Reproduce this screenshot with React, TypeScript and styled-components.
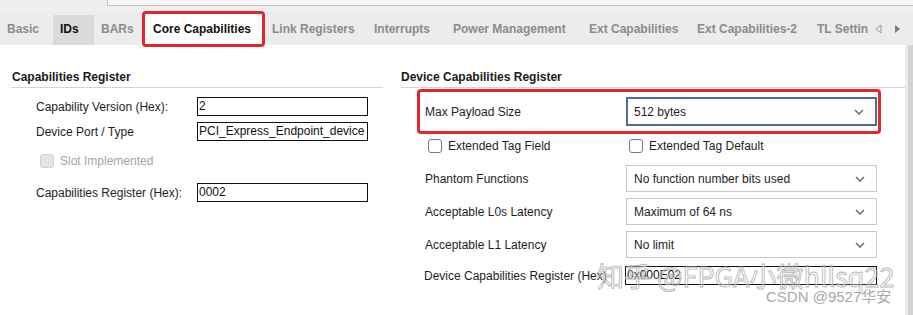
import React from 'react';
import styled, { createGlobalStyle } from 'styled-components';

const GlobalStyle = createGlobalStyle`
  html, body {
    margin: 0;
    padding: 0;
    background: #ffffff;
  }
  body {
    font-family: 'Liberation Sans', Arial, sans-serif;
    font-size: 12px;
    color: #1e1e1e;
  }
`;

const Page = styled.div`
  position: relative;
  width: 913px;
  height: 315px;
  overflow: hidden;
  display: flex;
  flex-direction: column;
  background: #ffffff;
`;

const TopStrip = styled.div`
  height: 12px;
  background: #efefef;
  display: flex;
`;

const TopBox = styled.div`
  margin-left: 107px;
  flex: 1;
  height: 5px;
  background: #f7f7f7;
  border-left: 1px solid #c4c4c4;
  border-bottom: 1px solid #c4c4c4;
`;

const TabBar = styled.div`
  height: 33px;
  background: #ececec;
  display: flex;
  align-items: stretch;
`;

const Tab = styled.div<{ $w: number; $active?: boolean; $dark?: boolean; $sep?: boolean }>`
  position: relative;
  flex: 0 0 ${(p) => p.$w}px;
  box-sizing: border-box;
  display: flex;
  align-items: center;
  padding-left: 7px;
  white-space: nowrap;
  overflow: hidden;
  font-weight: bold;
  font-size: 12px;
  color: ${(p) => (p.$active || p.$dark ? '#111111' : '#8b8b8b')};
  background: ${(p) => (p.$active ? '#ffffff' : p.$dark ? '#dadada' : 'transparent')};
  margin-top: ${(p) => (p.$dark ? '3px' : '0')};
  padding-bottom: ${(p) => (p.$dark ? '3px' : '0')};
  border-right: ${(p) => (p.$sep ? '1px solid transparent' : 'none')};

  &::after {
    content: '';
    display: ${(p) => (p.$sep ? 'block' : 'none')};
    position: absolute;
    right: -1px;
    top: 4px;
    bottom: 4px;
    width: 1px;
    background: #c6c6c6;
  }
`;

const ActiveTab = styled(Tab)`
  margin: -1px 0 -2px;
  padding-left: 8px;
  border: 3px solid #e1272b;
  border-radius: 4px;
`;

const TabArrows = styled.div`
  flex: 1;
  display: flex;
  align-items: center;
  gap: 12px;
  padding-left: 7px;
`;

const Body = styled.div`
  flex: 1;
  display: flex;
`;

const Column = styled.div<{ $w: number; $pl: number; $pr: number }>`
  flex: 0 0 ${(p) => p.$w}px;
  box-sizing: border-box;
  padding: 24px ${(p) => p.$pr}px 0 ${(p) => p.$pl}px;
  display: flex;
  flex-direction: column;
`;

const SectionTitle = styled.div`
  font-weight: bold;
  font-size: 12px;
  line-height: 16px;
  padding-bottom: 2px;
  border-bottom: 1px solid #d4d4d4;
  color: #1a1a1a;
`;

const FieldRow = styled.div<{ $mt?: number; $h?: number; $label: number; $pl?: number }>`
  display: grid;
  grid-template-columns: ${(p) => p.$label}px auto;
  align-items: center;
  margin-top: ${(p) => p.$mt ?? 0}px;
  padding-left: ${(p) => p.$pl ?? 0}px;
  height: ${(p) => p.$h ?? 19}px;
`;

const Label = styled.span<{ $pl?: number }>`
  padding-left: ${(p) => p.$pl ?? 0}px;
  white-space: nowrap;
  color: #1e1e1e;
`;

const TextInput = styled.div<{ $w: number }>`
  box-sizing: border-box;
  width: ${(p) => p.$w}px;
  height: 19px;
  border: 1px solid #111111;
  padding-left: 1px;
  line-height: 17px;
  white-space: nowrap;
  overflow: hidden;
  color: #111111;
`;

const Select = styled.div<{ $focus?: boolean }>`
  box-sizing: border-box;
  width: 251px;
  height: ${(p) => (p.$focus ? 29 : 27)}px;
  border: ${(p) => (p.$focus ? '2px solid #4d6aa3' : '1px solid #c9c9c9')};
  display: flex;
  align-items: center;
  justify-content: space-between;
  padding: 0 11px 0 ${(p) => (p.$focus ? 6 : 7)}px;
  color: #1e1e1e;
  background: #ffffff;
`;

const CheckRow = styled.div<{ $mt: number; $pl: number; $col?: number }>`
  display: grid;
  grid-template-columns: ${(p) => (p.$col ? `${p.$col}px auto` : 'auto')};
  align-items: center;
  margin-top: ${(p) => p.$mt}px;
  padding-left: ${(p) => p.$pl}px;
  height: 20px;
`;

const Check = styled.label<{ $disabled?: boolean }>`
  display: flex;
  align-items: center;
  gap: 6px;
  color: ${(p) => (p.$disabled ? '#a4a4a4' : '#1e1e1e')};
`;

const Box = styled.span<{ $disabled?: boolean }>`
  box-sizing: border-box;
  width: 14px;
  height: 14px;
  border-radius: 3px;
  border: 1px solid ${(p) => (p.$disabled ? '#cfcfcf' : '#7a7a7a')};
  background: ${(p) => (p.$disabled ? '#e4e4e4' : '#ffffff')};
`;

const Highlight = styled.div`
  margin: 1px 24px 0 16px;
  height: 45px;
  box-sizing: border-box;
  border: 3px solid #e1272b;
  border-radius: 4px;
  display: grid;
  grid-template-columns: 201px auto;
  align-items: center;
  padding-left: 5px;
`;

const ScrollBar = styled.div`
  flex: 1;
  background: #d3d3d3;
  border-left: 3px solid #ececec;
`;

const Watermark = styled.div`
  position: absolute;
  left: 597px;
  top: 259px;
  font-family: 'Noto Sans CJK SC', 'Liberation Sans', sans-serif;
  font-size: 27px;
  line-height: 34px;
  white-space: nowrap;
  color: rgba(255, 255, 255, 0.35);
  -webkit-text-stroke: 0.9px rgba(165, 165, 165, 0.8);
  pointer-events: none;
`;

const Credit = styled.div`
  position: absolute;
  left: 766px;
  top: 288px;
  font-family: 'Liberation Sans', 'Noto Sans CJK SC', sans-serif;
  font-size: 15px;
  line-height: 18px;
  color: #a9a9a9;
  pointer-events: none;
`;

const Chevron = () => (
  <svg width="10" height="6" viewBox="0 0 10 6">
    <path d="M1 1 L5 5 L9 1" fill="none" stroke="#6f6f6f" strokeWidth="1.6" />
  </svg>
);

const tabs = [
  { label: 'Basic', w: 53 },
  { label: 'IDs', w: 41, dark: true },
  { label: 'BARs', w: 48 },
  { label: 'Core Capabilities', w: 123, active: true },
  { label: 'Link Registers', w: 102, sep: true },
  { label: 'Interrupts', w: 79, sep: true },
  { label: 'Power Management', w: 136, sep: true },
  { label: 'Ext Capabilities', w: 108, sep: true },
  { label: 'Ext Capabilities-2', w: 120, sep: true },
  { label: 'TL Setting', w: 58 },
];

const latencySelects = [
  { label: 'Phantom Functions', value: 'No function number bits used', mt: 9 },
  { label: 'Acceptable L0s Latency', value: 'Maximum of 64 ns', mt: 6 },
  { label: 'Acceptable L1 Latency', value: 'No limit', mt: 6 },
];

export default function App() {
  return (
    <Page>
      <GlobalStyle />
      <TopStrip>
        <TopBox />
      </TopStrip>
      <TabBar>
        {tabs.map((t) =>
          t.active ? (
            <ActiveTab key={t.label} $w={t.w} $active>
              {t.label}
            </ActiveTab>
          ) : (
            <Tab key={t.label} $w={t.w} $dark={t.dark} $sep={t.sep}>
              {t.label}
            </Tab>
          )
        )}
        <TabArrows>
          <svg width="7" height="10" viewBox="0 0 7 10">
            <path d="M6 1 L1 5 L6 9 Z" fill="none" stroke="#9a9a9a" strokeWidth="1" />
          </svg>
          <svg width="7" height="10" viewBox="0 0 7 10">
            <path d="M1 1 L6 5 L1 9 Z" fill="#7a7a7a" />
          </svg>
          <svg width="8" height="11" viewBox="0 0 8 11">
            <path d="M0 1.5 H8 M0 5.5 H8 M0 9.5 H8" stroke="#8a8a8a" strokeWidth="1.4" />
          </svg>
        </TabArrows>
      </TabBar>
      <Body>
        <Column $w={390} $pl={12} $pr={7}>
          <SectionTitle>Capabilities Register</SectionTitle>
          <FieldRow $mt={9} $label={161} $pl={24}>
            <Label>Capability Version (Hex):</Label>
            <TextInput $w={171}>2</TextInput>
          </FieldRow>
          <FieldRow $mt={6} $label={161} $pl={24}>
            <Label>Device Port / Type</Label>
            <TextInput $w={171}>PCI_Express_Endpoint_device</TextInput>
          </FieldRow>
          <CheckRow $mt={10} $pl={28}>
            <Check $disabled>
              <Box $disabled />
              Slot Implemented
            </Check>
          </CheckRow>
          <FieldRow $mt={12} $label={161} $pl={24}>
            <Label>Capabilities Register (Hex):</Label>
            <TextInput $w={171}>0002</TextInput>
          </FieldRow>
        </Column>
        <Column $w={515} $pl={11} $pr={0}>
          <SectionTitle>Device Capabilities Register</SectionTitle>
          <Highlight>
            <Label>Max Payload Size</Label>
            <Select $focus>
              512 bytes
              <Chevron />
            </Select>
          </Highlight>
          <CheckRow $mt={2} $pl={27} $col={201}>
            <Check>
              <Box />
              Extended Tag Field
            </Check>
            <Check>
              <Box />
              Extended Tag Default
            </Check>
          </CheckRow>
          {latencySelects.map((s) => (
            <FieldRow key={s.label} $mt={s.mt} $h={27} $label={225}>
              <Label $pl={24}>{s.label}</Label>
              <Select>
                {s.value}
                <Chevron />
              </Select>
            </FieldRow>
          ))}
          <FieldRow $mt={8} $label={224}>
            <Label $pl={23}>Device Capabilities Register (Hex)</Label>
            <TextInput $w={252}>0x000E02</TextInput>
          </FieldRow>
        </Column>
        <ScrollBar />
      </Body>
      <Watermark>知乎 @FPGA小微hllsq22</Watermark>
      <Credit>CSDN @9527华安</Credit>
    </Page>
  );
}
